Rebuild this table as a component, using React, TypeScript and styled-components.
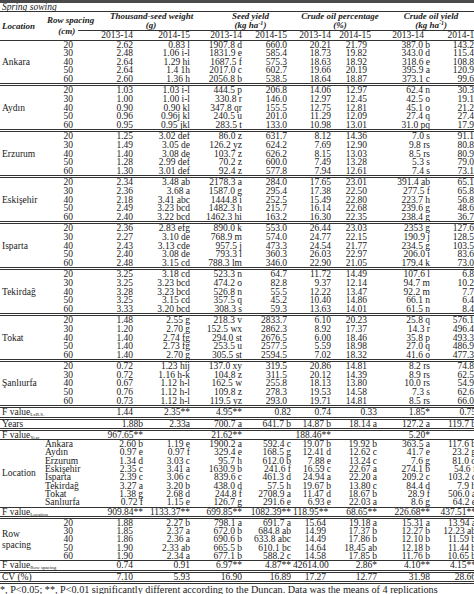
import React from "react";
import styled, { createGlobalStyle, css } from "styled-components";

const Global = createGlobalStyle`
  html, body { margin: 0; padding: 0; background: #fff; overflow: hidden; }
  body { font-family: "Liberation Serif", "Times New Roman", serif; color: #1a1a1a; }
`;

const Page = styled.div`
  width: 483px;
`;

const Table = styled.table`
  border-collapse: separate;
  border-spacing: 0;
  table-layout: fixed;
  width: 483px;
  font-size: 9.5px;
  border-top: 3px solid #4a4a4a;
  border-bottom: 3px double #333;
`;

type Sep = "none" | "thin" | "double";

const sepCss = (s?: Sep) =>
  s === "double"
    ? css`
        & > td,
        & > th {
          border-top: 3px double #333;
        }
      `
    : s === "thin"
    ? css`
        & > td,
        & > th {
          border-top: 1px solid #333;
        }
      `
    : "";

const Row = styled.tr<{ $sep?: Sep; $lh?: number }>`
  line-height: ${(p) => p.$lh ?? 8.3}px;
  ${(p) => sepCss(p.$sep)}
`;

const Caption = styled.td`
  font-style: italic;
  padding: 0 2px;
  line-height: 8px;
  border-bottom: 1px solid #333;
  white-space: nowrap;
`;

const HeadCell = styled.th<{ $pl?: number; $line?: boolean }>`
  font-weight: bold;
  font-style: italic;
  font-size: 9px;
  line-height: 9px;
  text-align: center;
  white-space: nowrap;
  padding: 0 0 0 ${(p) => p.$pl ?? 0}px;
  vertical-align: middle;
  border-bottom: ${(p) => (p.$line ? "1px solid #333" : "none")};
`;

const SideHead = styled.th<{ $pl?: number }>`
  font-weight: bold;
  font-style: italic;
  font-size: 9px;
  text-align: left;
  white-space: nowrap;
  padding: 0 0 0 ${(p) => p.$pl ?? 0}px;
  vertical-align: middle;
  line-height: 10.5px;
  border-bottom: 1px solid #333;
`;

const YearCell = styled.td<{ $pr: number }>`
  text-align: right;
  line-height: 8.5px;
  padding: 0 ${(p) => p.$pr}px 0 0;
  white-space: nowrap;
  border-bottom: 1px solid #333;
`;

const NameCell = styled.td<{ $pl?: number }>`
  text-align: left;
  white-space: nowrap;
  padding: 0 0 0 ${(p) => p.$pl ?? 2}px;
  vertical-align: middle;
`;

const WrapName = styled.td`
  text-align: left;
  padding: 0 0 0 2px;
  vertical-align: middle;
  line-height: 10.5px;
`;

const Num = styled.td<{ $pr: number }>`
  text-align: right;
  white-space: nowrap;
  padding: 0 ${(p) => p.$pr}px 0 0;
`;

const Sub = styled.sub`
  font-size: 5px;
  vertical-align: -1px;
  line-height: 0;
`;

const Sup = styled.sup`
  font-size: 6px;
  vertical-align: 3px;
  line-height: 0;
`;

const Note = styled.p`
  margin: 0;
  padding: 1px 0 0 0;
  font-size: 10.2px;
  line-height: 10px;
  white-space: nowrap;
`;

const TOP: [string, string[][]][] = [
  ["Ankara", [
    ["20", "2.62", "0.83 l", "1907.8 d", "660.0", "20.21", "21.79", "387.0 b", "143.2"],
    ["30", "2.48", "1.06 i-l", "1831.9 e", "585.4", "18.73", "19.82", "343.0 d", "115.4"],
    ["40", "2.64", "1.29 hi", "1687.5 f", "575.3", "18.63", "18.92", "318.6 e", "108.8"],
    ["50", "2.64", "1.4 1h", "2017.0 c", "602.7", "19.66", "20.19", "395.9 a", "120.9"],
    ["60", "2.60", "1.36 h", "2056.8 b", "538.5", "18.64", "18.87", "373.1 c", "99.6"],
  ]],
  ["Aydın", [
    ["20", "1.03", "1.03 i-l", "444.5 p", "206.8", "14.06", "12.97", "62.4 n", "30.3"],
    ["30", "1.00", "1.00 i-l", "330.8 r", "146.0", "12.97", "12.45", "42.5 o", "19.1"],
    ["40", "0.90", "0.90 kl", "347.8 qr", "155.5", "12.75", "12.81", "45.1 o", "21.2"],
    ["50", "0.96", "0.96j kl", "240.5 u", "201.0", "11.29", "12.09", "27.4 q", "27.4"],
    ["60", "0.95", "0.95 jkl", "283.5 t", "133.0", "10.98", "13.01", "31.0 pq", "17.9"],
  ]],
  ["Erzurum", [
    ["20", "1.25", "3.02 def", "86.0 z", "631.7", "8.12", "14.36", "7.0 s", "91.1"],
    ["30", "1.49", "3.05 de", "126.2 yz", "624.2", "7.69", "12.90", "9.8 rs", "80.8"],
    ["40", "1.40", "3.08 de", "103.7 z", "626.2", "8.15", "13.03", "8.5 rs", "80.9"],
    ["50", "1.28", "2.99 def", "70.2 z", "600.0", "7.49", "13.28", "5.3 s", "79.0"],
    ["60", "1.30", "3.01 def", "92.4 z", "577.8", "7.94", "12.61", "7.4 s", "73.1"],
  ]],
  ["Eskişehir", [
    ["20", "2.34", "3.48 ab", "2178.3 a", "284.0", "17.65", "23.01", "391.4 ab", "65.1"],
    ["30", "2.36", "3.68 a", "1587.0 g", "295.4", "17.38", "22.50", "277.5 f", "65.8"],
    ["40", "2.18", "3.41 abc", "1444.8 i", "252.5", "15.49", "22.80", "223.7 h", "56.8"],
    ["50", "2.49", "3.23 bcd", "1482.3 h", "215.7", "16.14", "22.68", "239.6 g", "48.6"],
    ["60", "2.40", "3.22 bcd", "1462.3 hi", "163.2", "16.30", "22.35", "238.4 g", "36.7"],
  ]],
  ["Isparta", [
    ["20", "2.36", "2.83 efg", "890.0 k", "553.0", "26.44", "23.03", "2353 g", "127.6"],
    ["30", "2.27", "3.10 de", "768.9 m", "574.0", "24.77", "22.15", "190.9 j", "128.5"],
    ["40", "2.43", "3.13 cde", "957.5 j", "473.3", "24.54", "21.77", "234.5 g", "103.5"],
    ["50", "2.40", "3.08 de", "793.3 l", "360.3", "26.03", "22.97", "206.0 i", "83.6"],
    ["60", "2.48", "3.15 cd", "788.3 lm", "346.0", "22.90", "21.05", "179.4 k", "73.0"],
  ]],
  ["Tekirdağ", [
    ["20", "3.25", "3.18 cd", "523.3 n", "64.7", "11.72", "14.49", "107.6 l", "6.8"],
    ["30", "3.25", "3.23 bcd", "474.2 o", "82.8", "9.37", "12.14", "94.7 m", "10.2"],
    ["40", "3.28", "3.23 bcd", "526.8 n", "55.5", "12.22", "13.47", "92.2 m", "7.7"],
    ["50", "3.25", "3.15 cd", "357.5 q", "45.2", "10.40", "14.86", "66.1 n", "6.4"],
    ["60", "3.33", "3.20 bcd", "308.3 s", "59.3", "13.63", "14.01", "61.5 n", "8.4"],
  ]],
  ["Tokat", [
    ["20", "1.48", "2.55 g", "218.3 v", "2833.7", "6.10", "20.23", "25.8 q", "576.1"],
    ["30", "1.20", "2.70 g", "152.5 wx", "2862.3", "8.92", "17.37", "14.3 r", "496.4"],
    ["40", "1.40", "2.74 fg", "294.0 st", "2676.5", "6.00", "18.46", "35.8 p", "493.3"],
    ["50", "1.40", "2.73 fg", "253.5 u", "2577.5", "5.59", "18.98", "27.0 q", "486.9"],
    ["60", "1.40", "2.70 g", "305.5 st", "2594.5", "7.02", "18.32", "41.6 o", "477.3"],
  ]],
  ["Şanlıurfa", [
    ["20", "0.72", "1.23 hij", "137.0 xy", "319.5", "20.86", "14.81", "8.2 rs", "74.8"],
    ["30", "0.72", "1.16 h-k", "104.8 z", "311.5", "20.12", "14.39", "8.9 rs", "62.5"],
    ["40", "0.67", "1.12 h-l", "162.5 w", "255.8", "18.13", "13.80", "10.0 rs", "54.9"],
    ["50", "0.76", "1.12 h-l", "109.8 z", "278.3", "19.53", "14.58", "7.3 s", "62.6"],
    ["60", "0.73", "1.12 h-l", "119.5 yz", "293.0", "19.71", "14.81", "8.5 rs", "66.0"],
  ]],
];

const LOCS: [string, string[]][] = [
  ["Ankara", ["2.60 b", "1.19 e", "1900.2 a", "592.4 c", "19.07 b", "19.92 b", "363.5 a", "117.6 b"]],
  ["Aydın", ["0.97 e", "0.97 f", "329.4 e", "168.5 g", "12.41 d", "12.62 c", "41.7 e", "23.2 g"]],
  ["Erzurum", ["1.34 d", "3.03 c", "95.7 h", "612.0 b", "7.88 e", "13.24 c", "7.6 g", "81.0 d"]],
  ["Eskişehir", ["2.35 c", "3.41 a", "1630.9 b", "241.6 f", "16.59 c", "22.67 a", "274.1 b", "54.6 f"]],
  ["Isparta", ["2.39 c", "3.06 c", "839.6 c", "461.3 d", "24.94 a", "22.20 a", "209.2 c", "103.2 c"]],
  ["Tekirdağ", ["3.27 a", "3.20 b", "438.0 d", "57.5 h", "19.67 b", "13.80 c", "84.4 d", "7.9 h"]],
  ["Tokat", ["1.38 g", "2.68 d", "244.8 f", "2708.9 a", "11.47 d", "18.67 b", "28.9 f", "506.0 a"]],
  ["Sanlıurfa", ["0.72 f", "1.15 e", "126.7 g", "291.6 e", "6.93 e", "22.03 a", "8.6 g", "64.2 e"]],
];

const SPACING: string[][] = [
  ["20", "1.88", "2.27 b", "798.1 a", "691.7 a", "15.64", "19.18 a", "15.31 a", "13.94 a"],
  ["30", "1.85", "2.37 a", "672.0 b", "684.8 ab", "14.99", "17.37 b", "12.27 b", "12.23 ab"],
  ["40", "1.86", "2.36 a", "690.6 b", "633.8 abc", "14.49", "17.86 b", "12.10 b", "11.59 b"],
  ["50", "1.90", "2.33 ab", "665.5 b", "610.1 bc", "14.64", "18.45 ab", "12.18 b", "11.44 b"],
  ["60", "1.90", "2.34 a", "677.1 b", "588.2 c", "14.58", "17.85 b", "11.76 b", "10.65 b"],
];

type Kind = "top" | "mid" | "low";

const PADS: Record<Kind, number[]> = {
  top: [0, 2, 2, 6, 2, 12, 2, 9],
  mid: [0, 2, 2, 2, 2, 2, 2, 7],
  low: [0, 2, 2, 2, 7, 2, 2, 7],
};

const padFor = (kind: Kind, i: number, v: string) => {
  if (i === 0) return /[^\d.]/.test(v) ? 2 : 12;
  return PADS[kind][i];
};

const Values = ({ vals, kind }: { vals: string[]; kind: Kind }) => (
  <>
    {vals.map((v, i) => (
      <Num key={i} $pr={padFor(kind, i, v)}>
        {v}
      </Num>
    ))}
  </>
);

const FLabel = ({ sub }: { sub: string }) => (
  <NameCell colSpan={2}>
    F value<Sub>{sub}</Sub>
  </NameCell>
);

const TOP_LH = 8.6;

export default function App() {
  return (
    <Page>
      <Global />
      <Table>
        <colgroup>
          <col style={{ width: 45 }} />
          <col style={{ width: 33 }} />
          <col style={{ width: 67 }} />
          <col style={{ width: 47 }} />
          <col style={{ width: 52 }} />
          <col style={{ width: 49 }} />
          <col style={{ width: 40 }} />
          <col style={{ width: 46 }} />
          <col style={{ width: 53 }} />
          <col style={{ width: 51 }} />
        </colgroup>
        <thead>
          <tr>
            <Caption colSpan={10}>Spring sowing</Caption>
          </tr>
          <Row>
            <SideHead rowSpan={3} $pl={2}>Location</SideHead>
            <SideHead rowSpan={3} $pl={2}>
              Row spacing
              <br />
              &nbsp;&nbsp;&nbsp;&nbsp;&nbsp;(cm)
            </SideHead>
            <HeadCell colSpan={2} $pl={32}>Thousand-seed weight</HeadCell>
            <HeadCell colSpan={2} $pl={16}>Seed yield</HeadCell>
            <HeadCell colSpan={2} $pl={8}>Crude oil percentage</HeadCell>
            <HeadCell colSpan={2}>Crude oil yield</HeadCell>
          </Row>
          <Row>
            <HeadCell colSpan={2} $pl={32} $line>(g)</HeadCell>
            <HeadCell colSpan={2} $pl={16} $line>
              (kg ha<Sup>-1</Sup>)
            </HeadCell>
            <HeadCell colSpan={2} $pl={8} $line>(%)</HeadCell>
            <HeadCell colSpan={2} $line>
              (kg ha<Sup>-1</Sup>)
            </HeadCell>
          </Row>
          <Row>
            <YearCell $pr={12}>2013-14</YearCell>
            <YearCell $pr={2}>2014-15</YearCell>
            <YearCell $pr={2}>2013-14</YearCell>
            <YearCell $pr={6}>2014-15</YearCell>
            <YearCell $pr={2}>2013-14</YearCell>
            <YearCell $pr={8}>2014-15</YearCell>
            <YearCell $pr={8}>2013-14</YearCell>
            <YearCell $pr={4}>2014-15</YearCell>
          </Row>
        </thead>
        <tbody>
          {TOP.map(([loc, rows], g) =>
            rows.map((r, j) => (
              <Row key={`${loc}-${j}`} $lh={TOP_LH} $sep={j === 0 && g > 0 ? "double" : "none"}>
                {j === 0 && <NameCell rowSpan={5}>{loc}</NameCell>}
                <Num $pr={5}>{r[0]}</Num>
                <Values vals={r.slice(1)} kind="top" />
              </Row>
            ))
          )}
          <Row $sep="double">
            <FLabel sub="LxR.S." />
            <Values vals={["1.44", "2.35**", "4.95**", "0.82", "0.74", "0.33", "1.85*", "0.75"]} kind="mid" />
          </Row>
          <Row $sep="double">
            <NameCell colSpan={2}>Years</NameCell>
            <Values vals={["1.88b", "2.33a", "700.7 a", "641.7 b", "14.87 b", "18.14 a", "127.2 a", "119.7 b"]} kind="mid" />
          </Row>
          <Row $sep="double">
            <FLabel sub="Year" />
            <Values vals={["967.65**", "", "21.62**", "", "188.46**", "", "5.20*", ""]} kind="mid" />
          </Row>
          {LOCS.map(([loc, vals], i) => (
            <Row key={loc} $sep={i === 0 ? "thin" : "none"}>
              {i === 0 && <WrapName rowSpan={8}>Location</WrapName>}
              <NameCell $pl={0}>{loc}</NameCell>
              <Values vals={vals} kind="mid" />
            </Row>
          ))}
          <Row $sep="thin">
            <FLabel sub="Location" />
            <Values
              vals={["909.84**", "1133.37**", "699.85**", "1082.39**", "118.95**", "68.65**", "226.68**", "437.51**"]}
              kind="low"
            />
          </Row>
          {SPACING.map((r, i) => (
            <Row key={r[0]} $sep={i === 0 ? "double" : "none"}>
              {i === 0 && <WrapName rowSpan={5}>Row spacing</WrapName>}
              <Num $pr={5}>{r[0]}</Num>
              <Values vals={r.slice(1)} kind="low" />
            </Row>
          ))}
          <Row $sep="thin">
            <FLabel sub="Row spacing" />
            <Values vals={["0.74", "0.91", "6.97**", "4.87**", "42614.00", "2.86*", "4.10**", "4.15**"]} kind="low" />
          </Row>
          <Row $sep="double">
            <NameCell colSpan={2}>CV (%)</NameCell>
            <Values vals={["7.10", "5.93", "16.90", "16.89", "17.27", "12.77", "31.98", "28.66"]} kind="low" />
          </Row>
        </tbody>
      </Table>
      <Note>
        *, P&lt;0.05; **, P&lt;0.01 significantly different according to the Duncan. Data was the means of 4
        replications
      </Note>
    </Page>
  );
}
